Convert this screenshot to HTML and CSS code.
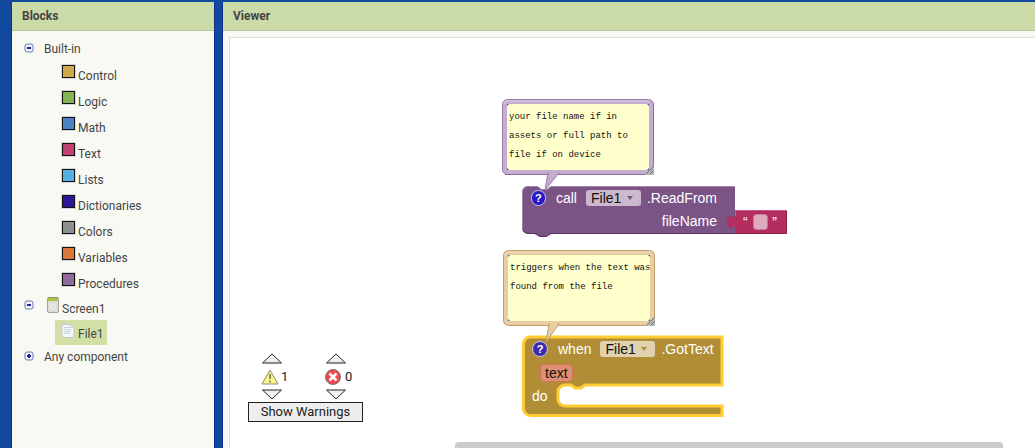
FILE: index.html
```html
<!DOCTYPE html>
<html lang="en">
<head>
<meta charset="utf-8">
<title>Blocks editor</title>
<link rel="stylesheet" href="styles.css">
</head>
<body>
<div class="app">
  <aside class="panel palette">
    <h2 class="panel-title">Blocks</h2>
    <ul class="tree">
      <li class="node root first"><button class="toggle" aria-label="Collapse Built-in"><svg viewBox="0 0 10 10"><rect x="1" y="1" width="8" height="8" rx="2"/><path d="M3 5h4"/></svg></button><span>Built-in</span></li>
      <li class="node leaf"><i class="swatch control"></i><span>Control</span></li>
      <li class="node leaf"><i class="swatch logic"></i><span>Logic</span></li>
      <li class="node leaf"><i class="swatch math"></i><span>Math</span></li>
      <li class="node leaf"><i class="swatch text"></i><span>Text</span></li>
      <li class="node leaf"><i class="swatch lists"></i><span>Lists</span></li>
      <li class="node leaf"><i class="swatch dictionaries"></i><span>Dictionaries</span></li>
      <li class="node leaf"><i class="swatch colors"></i><span>Colors</span></li>
      <li class="node leaf"><i class="swatch variables"></i><span>Variables</span></li>
      <li class="node leaf"><i class="swatch procedures"></i><span>Procedures</span></li>
      <li class="node root screen"><button class="toggle" aria-label="Collapse Screen1"><svg viewBox="0 0 10 10"><rect x="1" y="1" width="8" height="8" rx="2"/><path d="M3 5h4"/></svg></button>
        <svg class="screen-icon" viewBox="0 0 12 16"><rect x=".5" y=".5" width="11" height="15" rx="1.5" fill="#dededc" stroke="#a4a6a0"/><path d="M1 1h10v3H1z" fill="#a9c63a"/><path d="M1 .5h10" stroke="#8d8f72"/><circle cx="6" cy="9.500" r="2.500" fill="none" stroke="#f3f3f3"/></svg><span>Screen1</span></li>
      <li class="node selected"><svg class="file-icon" viewBox="0 0 14 16"><path d="M1 1.500h9l3 3V14.500H1z" fill="#f4f6fa" stroke="#c3cad3"/><path d="M10 1.500v3h3" fill="#fff" stroke="#c3cad3"/><path d="M3 4.500h6M3 6.500h7M3 8.500h7M3 10.500h6" stroke="#c4d0df"/></svg><span>File1</span></li>
      <li class="node root any"><button class="toggle" aria-label="Expand Any component"><svg viewBox="0 0 10 10"><rect x="1" y="1" width="8" height="8" rx="2"/><path d="M3 5h4M5 3v4"/></svg></button><span>Any component</span></li>
    </ul>
  </aside>
  <main class="panel viewer">
    <h2 class="panel-title">Viewer</h2>
    <div class="workspace">
      <svg class="shapes" width="600" height="400" viewBox="230 38 600 400" aria-hidden="true">
        <path d="M522 192a6 6 0 0 1 6-6h9l4 3h6l4-3H735V234H551l-5 3h-6l-5-3h-7a6 6 0 0 1-6-6z" fill="#7c5385"/>
        <path d="M522.500 228v-36a6 6 0 0 1 6-5.500h9l4 3h6l4-3H735" fill="none" stroke="#a084a7"/>
        <path d="M523 230a6 6 0 0 0 5 3.500h7l5 3h6l5-3H735" fill="none" stroke="#58345f"/>
        <path d="M735 210h52v24h-52v-7c-1-3-1 1-4 1-3 0-4-2-4-6s1-6 4-6c3 0 3 4 4 1z" fill="#b32d5e"/>
        <path d="M735.500 216v-5.500H787" fill="none" stroke="#c85b82"/>
        <path d="M735 233.500h51.500V211" fill="none" stroke="#8f2149"/>
        <rect x="753.500" y="214.500" width="14" height="15" rx="3" fill="#e1abbf" stroke="#cd7898"/>
        <path d="M523.500 344a7 7 0 0 1 7-7H722V385H585l-4 3h-6l-4-3h-6a7 7 0 0 0-7 7v7a7 7 0 0 0 7 7H722v9.500H530.500a7 7 0 0 1-7-7z" fill="#b18e35" stroke="#fc3" stroke-width="3"/>
        <path d="M558 392a7 7 0 0 1 7-7M722 337V385M722 407v9" fill="none" stroke="#fc3" stroke-width="2"/>
        <g stroke="#9b79a5">
          <rect x="502.500" y="99.500" width="151" height="75" rx="5" fill="#c4add0"/>
          <path d="M548 173l-3 17 14-17z" fill="#c4add0"/><path d="M549 172.500h9" stroke="#c4add0" stroke-width="3"/>
          <path d="M505 174.500h42M559 174.500h89M653.500 104v62" fill="none" stroke="#8f6a99"/>
        </g>
        <g stroke="#c29f67">
          <rect x="503.500" y="250.500" width="151" height="75" rx="5" fill="#e6cda3"/>
          <path d="M549 324l-3 18 13-18z" fill="#e6cda3"/><path d="M550 323.500h8" stroke="#e6cda3" stroke-width="3"/>
        </g>
        <path d="M504 104c0-2 1-3 3-3h143" fill="none" stroke="#dccce2"/>
        <path d="M505 255c0-2 1-3 3-3h143" fill="none" stroke="#f1dfbf"/>
        <g fill="#b5b5b5"><path d="M654 165v10h-10z"/><path d="M655 316v10h-10z"/></g>
        <path d="M646 174l8-8M650 174l4-4M647 325l8-8M651 325l4-4" stroke="#777"/>
      </svg>

      <textarea class="comment read" aria-label="ReadFrom comment" spellcheck="false">your file name if in
assets or full path to
file if on device</textarea>
      <textarea class="comment got" aria-label="GotText comment" spellcheck="false">triggers when the text was
found from the file</textarea>
      <svg class="shapes" width="600" height="400" viewBox="230 38 600 400" aria-hidden="true"><path d="M507 106v-2h2zM647 104h2v2zM507 168v2h2zM508 257v-2h2zM648 255h2v2zM508 319v2h2zM648 321h2v-2zM647 170h2v-2z" fill="#3159a6"/></svg>

      <section class="block call">
        <div class="row"><button class="help">?</button><label for="call-file">call</label><span class="drop"><select id="call-file"><option>File1</option></select></span><span class="method">.ReadFrom</span></div>
        <div class="row argument">fileName</div>
      </section>
      <div class="literal"><span>“</span><span>”</span></div>

      <section class="block event">
        <div class="row"><button class="help">?</button><label for="event-file">when</label><span class="drop"><select id="event-file"><option>File1</option></select></span><span class="method">.GotText</span></div>
        <div class="row parameter"><span>text</span></div>
        <div class="row statement">do</div>
      </section>

      <div class="warnings">
        <div class="counters">
          <div class="counter">
            <button class="arrow" aria-label="Previous warning"><svg viewBox="0 0 22 11"><path d="M1.500 10L11 1l9.500 9z"/></svg></button>
            <div class="count"><svg viewBox="0 0 18 16"><path d="M9 1L17 15H1z" fill="#fbf687" stroke="#8d8d80" stroke-linejoin="round"/><path d="M9 5v5M9 11.500v2" stroke="#8b8a6c" stroke-width="2"/></svg><span>1</span></div>
            <button class="arrow" aria-label="Next warning"><svg viewBox="0 0 22 11"><path d="M1.500 1L11 10l9.500-9z"/></svg></button>
          </div>
          <div class="counter">
            <button class="arrow" aria-label="Previous error"><svg viewBox="0 0 22 11"><path d="M1.500 10L11 1l9.500 9z"/></svg></button>
            <div class="count"><svg viewBox="0 0 18 16"><circle cx="8" cy="8" r="7.500" fill="#f4474d" stroke="#777"/><path d="M4.500 4.500l7 7M11.500 4.500l-7 7" stroke="#fff" stroke-width="2.500"/></svg><span>0</span></div>
            <button class="arrow" aria-label="Next error"><svg viewBox="0 0 22 11"><path d="M1.500 1L11 10l9.500-9z"/></svg></button>
          </div>
        </div>
        <button class="show">Show Warnings</button>
      </div>
      <div class="scrollbar"></div>
    </div>
  </main>
</div>
</body>
</html>
```
FILE: styles.css
```css
* { box-sizing: border-box; }
body { margin: 0; font-family: Roboto, sans-serif; font-size: 12px; color: #444; }
button, select, textarea { margin: 0; padding: 0; border: 0; background: none; font: inherit; color: inherit; border-radius: 0; }
svg { display: block; }

.app { display: flex; gap: 7px; min-height: 100vh; padding: 2px 0 0 11px; background: #13489f; }
.panel { display: flex; flex-direction: column; background: #f8f9f3; border: solid #0d2f91; border-width: 0 0 0 1px; }
.palette { flex: 0 0 204px; border-right-width: 1px; }
.viewer { flex: 1; min-width: 0; }
.panel-title { margin: 0; padding: 0 10px; height: 29px; line-height: 29px; font-size: 12px; font-weight: 700; color: #444; background: #cbdba7; border-bottom: 1px solid #b9c4a0; }

.tree { margin: 0; padding: 4px 0 0 12px; list-style: none; line-height: 16px; }
.node { display: flex; align-items: center; height: 26px; }
.root { gap: 10px; }
.first { height: 27px; }
.leaf { padding-left: 38px; gap: 3px; }
.leaf span, .screen span { padding-top: 1px; }
.toggle { width: 10px; height: 10px; margin-bottom: 2px; }
.toggle svg { width: 10px; height: 10px; fill: #f3f5fc; stroke: #6678b8; }
.toggle path { stroke: #2222a8; stroke-width: 2; }
.swatch { width: 13px; height: 13px; margin-bottom: 7px; border: 1px solid #111; outline: 1px solid #d5d8df; }
.control { background: #d3aa4b; }
.logic { background: #85b552; }
.math { background: #4d83c3; }
.text { background: #c23f71; }
.lists { background: #55b0df; }
.dictionaries { background: #2d1799; }
.colors { background: #8f908b; }
.variables { background: #dc763a; }
.procedures { background: #8e6a97; }
.screen { height: 24px; gap: 3px; }
.screen .toggle { margin: 0 10px 6px 0; }
.screen-icon { width: 12px; height: 16px; margin-bottom: 6px; }
.selected { width: 52px; height: 25px; margin-left: 31px; padding-left: 6px; gap: 3px; background: #d2e0a6; }
.selected span { padding-top: 3px; }
.file-icon { width: 14px; height: 16px; margin-bottom: 3px; }
.any { height: 24px; }

.workspace { position: relative; flex: 1; margin: 6px 0 0 6px; background: #fff; border: solid #ddd; border-width: 1px 0 0 1px; overflow: hidden; }
.shapes { position: absolute; left: 0; top: 0; pointer-events: none; }
.comment { position: absolute; width: 142px; height: 66px; padding: 4px 0 0 2px; background: #ffc; color: #111; font-family: "Liberation Mono", monospace; font-size: 9px; line-height: 19px; white-space: pre; resize: none; overflow: hidden; outline: 0; }
.read { left: 277px; top: 66px; }
.got { left: 278px; top: 217px; }

.block { position: absolute; display: flex; flex-direction: column; padding-left: 9px; color: #fff; font-family: "Liberation Sans", Arial, sans-serif; font-size: 14px; line-height: 16px; }
.call { left: 292px; top: 148px; width: 213px; padding-right: 18px; }
.event { left: 293px; top: 299px; width: 200px; }
.row { display: flex; align-items: center; height: 24px; }
.argument { justify-content: flex-end; height: 22px; }
.statement { height: 22px; }
.help { width: 16px; height: 16px; margin-right: 10px; border: 1px solid #c9c5ec; border-radius: 8px; background: #2718c8; font-size: 11px; font-weight: 700; line-height: 14px; text-align: center; }
.event .help { background: #3c2cab; }
.drop { position: relative; display: flex; margin: 0 6px 0 9px; }
.drop::after { content: ""; position: absolute; right: 8px; top: 6px; border: solid transparent; border-width: 4px 3px 0; border-top-color: #7c5385; pointer-events: none; }
.event .drop::after { border-top-color: #b18e35; }
.drop select { appearance: none; width: 55px; height: 16px; padding-left: 5px; border-radius: 3px; background: #cbbace; color: #111; line-height: 16px; }
.event .drop select { background: #e0d2ae; }
.parameter span { margin-left: 8px; padding: 0 4px; border: 1px solid #cb765b; border-radius: 4px; background: #df8e70; color: #111; }
.literal { position: absolute; left: 513px; top: 176px; width: 34px; display: flex; justify-content: space-between; color: #fff; font-family: "Liberation Sans", Arial, sans-serif; font-size: 14px; line-height: 16px; }

.warnings { position: absolute; left: 18px; bottom: 26px; width: 115px; color: #222; font-size: 13px; }
.counters { display: flex; justify-content: space-between; padding: 0 16px 0 13px; }
.counter { display: flex; flex-direction: column; align-items: flex-start; width: 22px; }
.counter:last-child { align-items: flex-start; }
.counters { padding-right: 16px; }
.arrow, .arrow svg { display: block; width: 22px; height: 11px; }
.arrow svg { fill: #eee; stroke: #222; }
.count { display: flex; align-items: center; gap: 2px; height: 25px; }
.count svg { width: 18px; height: 16px; }
.show { display: block; width: 100%; height: 20px; margin-top: 2px; border: 1px solid #222; background: #eee; font-size: 13px; line-height: 18px; }
.scrollbar { position: absolute; left: 28%; right: 32px; bottom: 0; height: 6px; border-radius: 4px 4px 0 0; background: #ccc; }
```
